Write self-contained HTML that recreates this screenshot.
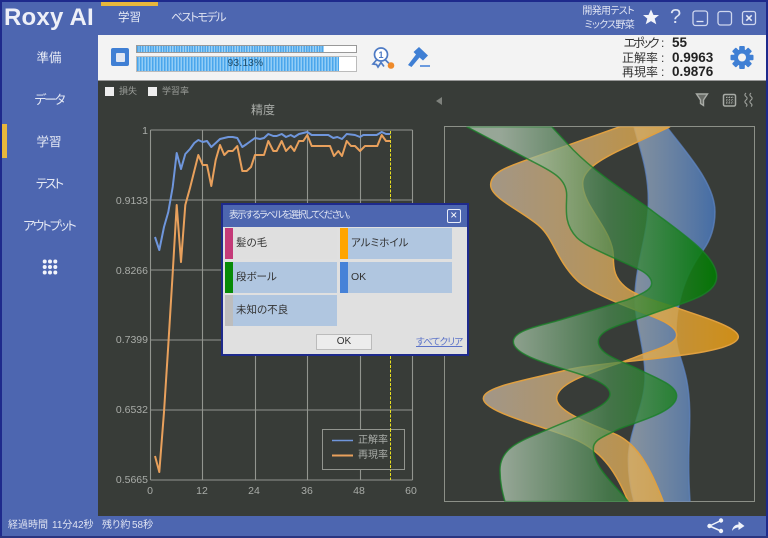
<!DOCTYPE html>
<html lang="ja"><head><meta charset="utf-8"><title>Roxy AI</title>
<style>
html,body{margin:0;padding:0;background:#fff}
#app{position:relative;width:768px;height:538px;overflow:hidden;background:#4d66b0;font-family:"Liberation Sans","Noto Sans CJK JP",sans-serif;color:#fff;font-feature-settings:"palt";filter:blur(.35px)}
#app div{position:absolute;white-space:nowrap}
#app svg{position:absolute;left:0;top:0}
.nav{left:0;width:98px;text-align:center;font-size:12.5px;color:#e4e8f4}
.kn{letter-spacing:-2px}
.row{background:#b0c6e0;width:112px;height:31px}
.sw{left:0;top:0;width:8px;height:31px}
.rt{left:11px;top:0;line-height:31px;font-size:10.5px;color:#333}
.yl,.xl{font-size:10.5px;color:#a9aca8}
.yl{right:620px;text-align:right}
.xl{top:485px;width:30px;text-align:center}
.met{font-size:12px;color:#333;line-height:14px;width:35px;left:622px;text-align:right}
.col{font-size:12px;color:#333;line-height:14px;left:661px}
.val{font-size:13.5px;font-weight:bold;color:#222;line-height:14px;left:672px}
.st{top:519px;font-size:10px;line-height:14px;color:#dfe3f2}
</style></head><body>
<div id="app">
<div style="left:0;top:0;width:768px;height:2px;background:#1e2a8c"></div>
<div style="left:0;top:0;width:2px;height:538px;background:#1e2a8c"></div>
<div style="left:766px;top:0;width:2px;height:538px;background:#1e2a8c"></div>
<div style="left:0;top:536px;width:768px;height:2px;background:#2a3580"></div>
<div style="left:98px;top:35px;width:668px;height:45px;background:#f3f3f3"></div>
<div style="left:98px;top:80px;width:668px;height:1px;background:#999"></div>
<div style="left:98px;top:81px;width:668px;height:435px;background:#383c38"></div>

<div style="left:4px;top:4px;font-size:24px;font-weight:bold;line-height:28px;letter-spacing:.2px;color:#eef0f8">Roxy AI</div>
<div style="left:101px;top:2px;width:57px;height:4px;background:#e8b83c"></div>
<div style="left:101px;top:10px;width:57px;text-align:center;font-size:11.5px;line-height:17px;color:#e8ebf6">学習</div>
<div style="left:171px;top:10px;font-size:11.5px;line-height:17px;color:#dfe3f2;letter-spacing:-1.6px">ベストモデル</div>
<div style="left:546px;top:5px;width:88px;text-align:right;font-size:10px;line-height:14px;color:#dfe3f2;letter-spacing:-.7px">開発用テスト<br>ミックス野菜</div>

<div class="nav" style="top:47px">準備</div>
<div class="nav kn" style="top:89px">データ</div>
<div class="nav" style="top:131px">学習</div>
<div class="nav kn" style="top:173px">テスト</div>
<div class="nav kn" style="top:215px">アウトプット</div>
<div style="left:2px;top:124px;width:5px;height:34px;background:#e8b83c"></div>

<div style="left:111px;top:48px;width:18px;height:18px;background:#3f7fd4;border-radius:2px"></div>
<div style="left:116px;top:53px;width:9px;height:9px;background:#dfe6f3;border-radius:1px"></div>
<div style="left:136px;top:45px;width:219px;height:6px;background:#fff;border:1px solid #999"></div>
<div style="left:137px;top:46px;width:187px;height:6px;background:repeating-linear-gradient(90deg,#4fa7ea 0 1.4px,#9bd0f5 1.4px 2.6px)"></div>
<div style="left:136px;top:56px;width:219px;height:14px;background:#fff;border:1px solid #bbb"></div>
<div style="left:137px;top:57px;width:202px;height:14px;background:repeating-linear-gradient(90deg,#4aa6ec 0 1.6px,#92cdf6 1.6px 3px)"></div>
<div style="left:136px;top:57px;width:219px;text-align:center;font-size:10px;line-height:14px;color:#1e4a66;letter-spacing:.3px">93.13%</div>

<div class="met" style="top:36px;letter-spacing:-2.5px">エポック</div><div class="col" style="top:36px">:</div>
<div class="met" style="top:51px">正解率</div><div class="col" style="top:51px">:</div>
<div class="met" style="top:65px">再現率</div><div class="col" style="top:65px">:</div>
<div class="val" style="top:36px">55</div>
<div class="val" style="top:51px">0.9963</div>
<div class="val" style="top:65px">0.9876</div>

<div style="left:105px;top:87px;width:9px;height:9px;background:#eee"></div>
<div style="left:119px;top:85px;font-size:9px;line-height:13px;color:#9a9d99">損失</div>
<div style="left:148px;top:87px;width:9px;height:9px;background:#eee"></div>
<div style="left:162px;top:85px;font-size:9px;line-height:13px;color:#9a9d99">学習率</div>
<div style="left:251px;top:102px;font-size:12px;line-height:17px;color:#a9aca8">精度</div>

<div class="yl" style="top:125px">1</div>
<div class="yl" style="top:195px">0.9133</div>
<div class="yl" style="top:265px">0.8266</div>
<div class="yl" style="top:334px">0.7399</div>
<div class="yl" style="top:404px">0.6532</div>
<div class="yl" style="top:474px">0.5665</div>
<div class="xl" style="left:135px">0</div>
<div class="xl" style="left:187px">12</div>
<div class="xl" style="left:239px">24</div>
<div class="xl" style="left:292px">36</div>
<div class="xl" style="left:344px">48</div>
<div class="xl" style="left:396px">60</div>

<svg width="768" height="538" viewBox="0 0 768 538">
<defs>
<linearGradient id="gg" gradientUnits="userSpaceOnUse" x1="180" x2="830" y1="0" y2="0"><stop offset="0" stop-color="#bcd0bc" stop-opacity=".72"/><stop offset=".5" stop-color="#4a8a50" stop-opacity=".72"/><stop offset="1" stop-color="#007a00" stop-opacity=".9"/></linearGradient>
<linearGradient id="og" gradientUnits="userSpaceOnUse" x1="130" x2="895" y1="0" y2="0"><stop offset="0" stop-color="#d8c4b0" stop-opacity=".66"/><stop offset="1" stop-color="#f0a010" stop-opacity=".82"/></linearGradient>
<linearGradient id="bg" gradientUnits="userSpaceOnUse" x1="565" x2="825" y1="0" y2="0"><stop offset="0" stop-color="#b8c8dc" stop-opacity=".62"/><stop offset="1" stop-color="#4a80d0" stop-opacity=".72"/></linearGradient>
<clipPath id="cp"><rect x="12" y="20" width="931" height="1125"/></clipPath>
</defs>
<!-- grid -->
<g stroke="#92958f" stroke-width="1.1" fill="none">
<path d="M150.500 130H412.500M150.500 200H412.500M150.500 270H412.500M150.500 340H412.500M150.500 410H412.500M150.500 480H412.500"/>
<path d="M150.500 130V480M202.500 130V480M255.500 130V480M307.500 130V480M360.500 130V480M412.500 130V480"/>
</g>
<path d="M390.500 131V480" stroke="#e8e020" stroke-width="1" stroke-dasharray="3 1.500" fill="none"/>
<!-- orange line -->
<polyline fill="none" stroke="#e8a05c" stroke-width="2" stroke-linejoin="round" points="155,456 159.300,472 164,412 168.300,345 172.700,273 176.700,205 181,262 185.300,205 190,188 198.300,155 202.700,165 207,165 211.300,186 215.700,160 220,145 224.300,155 228.300,151 232.700,151 237.300,146 242.300,171 246.700,171 251,167 255,155 264,155 268.300,141 273.300,151 276.700,151 281.700,141 286,151 290.700,146 294.300,151 299,141 303.300,141 307.300,135 311.700,146 330,146 334,156 338.300,151 342,156 346.700,141 351,146 355,146 360,151 365,146 377.300,146 381.700,135 386,141 390.300,141"/>
<!-- blue line -->
<polyline fill="none" stroke="#6f96dc" stroke-width="2" stroke-linejoin="round" points="155,237 159.300,250 164,227 168.300,212 172.700,187 176.700,153 181,169 185.300,154 190,149 194.300,143 198.300,140 202.700,142 207,141 211.300,147 215.700,143 220,139 228.300,137 232.700,137 237.300,138 242.300,147 246.700,144 255,138 260,139 264,138 268.300,134 273.300,136 276.700,136 281.700,134 286,137 290.700,135 294.300,137 299,134 307.300,132 311.700,135 328.300,135 333.300,138 337.300,137 342,139 346.700,134 355,135 360,137 363.300,135 376.700,135 381.700,132 386,134 390.300,134"/>
<!-- legend -->
<rect x="322.500" y="429.500" width="82" height="40" fill="#383c38" stroke="#92958f"/>
<path d="M332 440.500H353" stroke="#6f96dc" stroke-width="1.500"/>
<path d="M332 455.500H353" stroke="#e8a05c" stroke-width="2"/>
<path d="M390.500 429V470" stroke="#e8e020" stroke-width="1" stroke-dasharray="3 1.500" fill="none"/>

<!-- sankey -->
<rect x="444.500" y="126.500" width="310" height="375" fill="none" stroke="#8c9088"/>
<g transform="translate(440 120) scale(.33333)" clip-path="url(#cp)" stroke-width="4.500">
<path fill="url(#bg)" stroke="#5f86c4" stroke-opacity=".7" d="M582 20C600 90 625 150 625 245C625 340 590 420 585 520C581 600 615 680 615 770C615 860 565 930 565 1020C565 1080 575 1120 582 1145L750 1145C746 1080 745 1040 747 980C750 900 752 840 740 780C728 720 708 690 708 640C708 560 730 470 790 390C815 355 825 315 825 275C825 190 740 100 680 20Z"/>
<path fill="url(#og)" stroke="#e0a040" d="M540 20L265 118C210 138 152 155 152 195C152 235 250 275 300 320C340 356 350 420 410 480C440 510 520 545 600 575C650 594 710 615 710 645C710 675 640 690 590 710C500 746 350 780 350 835C350 870 430 905 520 940C590 967 630 1040 670 1145L565 1145C530 1060 490 1000 420 965C340 925 130 880 130 835C130 800 260 780 380 750C500 720 895 710 895 650C895 620 770 585 705 562C660 546 590 530 555 500C525 475 520 450 520 410C520 330 428 260 428 190C428 150 480 120 530 95L690 20Z"/>
<path fill="url(#gg)" stroke="#1a8028" stroke-opacity=".8" d="M80 20L265 118C325 150 380 170 380 225C380 265 370 310 410 352C440 383 540 420 600 450C620 460 635 475 635 490C635 510 600 525 560 540L360 600C300 618 220 630 220 665C220 700 300 725 380 750C440 768 510 790 510 822C510 860 410 890 320 930C250 960 180 980 180 1050C180 1090 188 1120 195 1145L565 1145C520 1090 460 1040 460 985C460 960 490 950 530 930C570 910 710 880 710 828C710 795 650 775 600 750C550 725 475 705 475 665C475 625 560 610 640 580C720 550 830 530 830 470C830 410 740 350 640 275C580 230 480 170 400 90L335 20Z"/>
</g>

<!-- panel icons -->
<path d="M442 97L436 101 442 105Z" fill="#7e817c"/>
<path d="M696.500 94H707.500L703.500 100V105.500L700.500 103.500V100Z" fill="#6a6d68" stroke="#a8aba6" stroke-width="1.400"/>
<rect x="723.500" y="94.500" width="12" height="11.500" rx="1.500" fill="none" stroke="#a8aba6" stroke-width="1.500"/>
<path d="M726 97.500H733.500M726 100.200H733.500M726 103H733.500M727 96.500V104M729.600 96.500V104M732.200 96.500V104" stroke="#a8aba6" stroke-width=".9" stroke-dasharray="1.200 1.200"/>
<path d="M746 93q-2.200 2 0 3.500q2.200 2 0 3.500q-2.200 2 0 3.500q2 1.500 0 3M751 93q-2.200 2 0 3.500q2.200 2 0 3.500q-2.200 2 0 3.500q2 1.500 0 3" fill="none" stroke="#9ea19c" stroke-width="1.100"/>

<!-- header icons -->
<path d="M651 9.500L653.500 15H659L654.700 18.600 656.300 24.300 651 21.100 645.700 24.300 647.300 18.600 643 15H648.500Z" fill="#f2f4fa"/>
<rect x="693" y="11" width="14.500" height="14.500" rx="2.500" fill="none" stroke="#cfd7ee" stroke-width="1.300"/>
<path d="M696.500 21.500H703.500" stroke="#dfe5f4" stroke-width="1.300"/>
<rect x="718" y="11.500" width="13.500" height="13.500" rx="2.500" fill="none" stroke="#cfd7ee" stroke-width="1.300"/>
<rect x="742.500" y="11.500" width="13" height="13" rx="2" fill="none" stroke="#cfd7ee" stroke-width="1.300"/>
<path d="M746.300 15.300L751.700 20.700M751.700 15.300L746.300 20.700" stroke="#e6eaf6" stroke-width="1.500"/>

<!-- sidebar dots -->
<g fill="#f2f4fa"><circle cx="44.700" cy="261.500" r="2"/><circle cx="50" cy="261.500" r="2"/><circle cx="55.300" cy="261.500" r="2"/><circle cx="44.700" cy="267" r="2"/><circle cx="50" cy="267" r="2"/><circle cx="55.300" cy="267" r="2"/><circle cx="44.700" cy="272.500" r="2"/><circle cx="50" cy="272.500" r="2"/><circle cx="55.300" cy="272.500" r="2"/></g>

<!-- ribbon -->
<circle cx="381" cy="54.500" r="6.500" fill="#fff" stroke="#4d7ac4" stroke-width="1.700"/>
<path d="M376.500 60L373 64 376.500 64.500 378 67 381 62.500 384 66.500M385.500 60L389 63.500" fill="none" stroke="#4d7ac4" stroke-width="1.700"/>
<circle cx="391" cy="65.500" r="3.300" fill="#ee8a2a"/>
<!-- gavel -->
<path d="M419 47L428 55.500 423 60.500 419.500 57.500 411.500 67 408 65 416 54.500 413.500 52Z" fill="#3f7fd4"/>
<rect x="420" y="65" width="10" height="2" fill="#6b9ade"/>
<!-- gear -->
<g transform="translate(742 57.500)"><g fill="#3f7fd4"><circle r="8.300"/><rect x="-2.800" y="-11.500" width="5.600" height="23" rx="1"/><rect x="-2.800" y="-11.500" width="5.600" height="23" rx="1" transform="rotate(45)"/><rect x="-2.800" y="-11.500" width="5.600" height="23" rx="1" transform="rotate(90)"/><rect x="-2.800" y="-11.500" width="5.600" height="23" rx="1" transform="rotate(135)"/></g><circle r="4" fill="#f3f3f3"/></g>

<!-- status icons -->
<g fill="#f0f3fa"><circle cx="709.500" cy="526" r="2.200"/><circle cx="721" cy="520.500" r="2.200"/><circle cx="721" cy="531" r="2.200"/></g>
<path d="M709.500 526L721 520.500M709.500 526L721 531" stroke="#f0f3fa" stroke-width="1.500"/>
<path d="M732 531C732.500 526.500 735.500 524.500 738.500 524.500V521.500L744.500 526 738.500 530V527.500C736 527.500 734 528.500 732 531Z" fill="#f0f3fa"/>
</svg>

<div style="left:670px;top:5px;font-size:20px;line-height:24px;color:#dfe5f4">?</div>
<div style="left:374px;top:47.500px;width:14px;text-align:center;font-size:9px;font-weight:bold;line-height:14px;color:#4d7ac4">1</div>
<div class="st" style="left:8px">経過時間</div>
<div class="st" style="left:52px">11分42秒</div>
<div class="st" style="left:102px">残り約</div>
<div class="st" style="left:132px">58秒</div>
<div style="left:358px;top:433px;font-size:10px;line-height:15px;color:#a9aca8">正解率<br>再現率</div>

<!-- dialog -->
<div style="left:221px;top:203px;width:248px;height:153px;background:#e0e0e0;border:2px solid #1e2a8c;box-sizing:border-box">
<div style="left:0;top:0;width:244px;height:22px;background:#4d66b0"></div>
<div style="left:6px;top:4px;font-size:9.500px;line-height:14px;color:#e4e8f4;letter-spacing:-1.450px">表示するラベルを選択してください。</div>
<div style="left:224px;top:4px;width:11.500px;height:11.500px;border:1.300px solid #e8ecf8;border-radius:2px;text-align:center;font-size:12px;line-height:11.500px;color:#fff">×</div>
<div class="row" style="left:2px;top:23px;background:#dfdfdf"><div class="sw" style="background:#c43a78"></div><div class="rt">髪の毛</div></div>
<div class="row" style="left:117px;top:23px"><div class="sw" style="background:#ffa500"></div><div class="rt">アルミホイル</div></div>
<div class="row" style="left:2px;top:57px"><div class="sw" style="background:#078a07"></div><div class="rt">段ボール</div></div>
<div class="row" style="left:117px;top:57px"><div class="sw" style="background:#4682d8"></div><div class="rt">OK</div></div>
<div class="row" style="left:2px;top:90px"><div class="sw" style="background:#bdbdbd"></div><div class="rt">未知の不良</div></div>
<div style="left:93px;top:129px;width:54px;height:14px;background:#ececec;border:1px solid #bbb;text-align:center;font-size:10px;line-height:14px;color:#333">OK</div>
<div style="left:193px;top:131px;font-size:9.500px;line-height:13px;color:#5b72c8;text-decoration:underline;letter-spacing:-.8px">すべてクリア</div>
</div>
</div>
</body></html>
